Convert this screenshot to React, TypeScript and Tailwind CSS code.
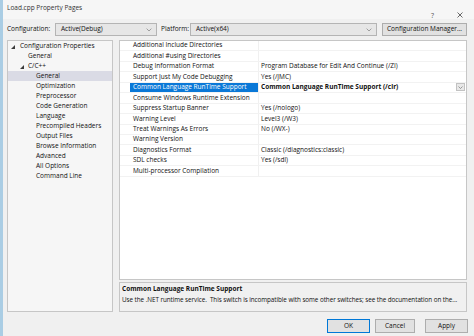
import React from "react";

function Chevron() {
  return (
    <svg width="6" height="4" viewBox="0 0 6 4">
      <path d="M0.6 0.6 L3 3 L5.4 0.6" fill="none" stroke="#8c8c8c" strokeWidth="0.8" />
    </svg>
  );
}

function Tri() {
  return (
    <svg width="4" height="4" viewBox="0 0 4 4">
      <polygon points="4,0 4,4 0,4" fill="#3c3c3c" />
    </svg>
  );
}

type TreeItem = { label: string; pad: string; exp?: boolean; slot?: string; sel?: boolean };

const tree: TreeItem[] = [
  { label: "Configuration Properties", pad: "pl-[3px]", exp: true, slot: "w-[9px]" },
  { label: "General", pad: "pl-[20px]" },
  { label: "C/C++", pad: "pl-[12px]", exp: true, slot: "w-[8px]" },
  { label: "General", pad: "pl-[28px]", sel: true },
  { label: "Optimization", pad: "pl-[28px]" },
  { label: "Preprocessor", pad: "pl-[28px]" },
  { label: "Code Generation", pad: "pl-[28px]" },
  { label: "Language", pad: "pl-[28px]" },
  { label: "Precompiled Headers", pad: "pl-[28px]" },
  { label: "Output Files", pad: "pl-[28px]" },
  { label: "Browse Information", pad: "pl-[28px]" },
  { label: "Advanced", pad: "pl-[28px]" },
  { label: "All Options", pad: "pl-[28px]" },
  { label: "Command Line", pad: "pl-[28px]" },
];

const rows: [string, string][] = [
  ["Additional Include Directories", ""],
  ["Additional #using Directories", ""],
  ["Debug Information Format", "Program Database for Edit And Continue (/ZI)"],
  ["Support Just My Code Debugging", "Yes (/JMC)"],
  ["Common Language RunTime Support", "Common Language RunTime Support (/clr)"],
  ["Consume Windows Runtime Extension", ""],
  ["Suppress Startup Banner", "Yes (/nologo)"],
  ["Warning Level", "Level3 (/W3)"],
  ["Treat Warnings As Errors", "No (/WX-)"],
  ["Warning Version", ""],
  ["Diagnostics Format", "Classic (/diagnostics:classic)"],
  ["SDL checks", "Yes (/sdl)"],
  ["Multi-processor Compilation", ""],
];

export default function App() {
  return (
    <div className="w-[474px] h-[336px] flex bg-[#f0f0f0] overflow-hidden font-['Open_Sans',sans-serif] text-[6.5px] leading-none text-[#111]">
      <div className="w-[3px] h-full bg-[#aacde4]" />
      <div className="flex-1 flex flex-col">
        {/* title bar */}
        <div className="h-[19px] flex items-start bg-[#f6f6f6] relative">
          <span className="pl-[4px] pt-[5px] text-[#333]">Load.cpp Property Pages</span>
          <span className="absolute left-[428px] top-[12px] text-[7px] text-[#555]">?</span>
          <svg className="absolute left-[454px] top-[12px]" width="6" height="6" viewBox="0 0 6 6">
            <path d="M0.5 0.5 L5.5 5.5 M5.5 0.5 L0.5 5.5" stroke="#444" strokeWidth="0.8" />
          </svg>
        </div>

        {/* configuration row */}
        <div className="mt-[4px] h-[13px] flex items-center pl-[4px]">
          <span className="w-[48px]">Configuration:</span>
          <div className="w-[102px] h-[13px] border border-[#b4b4b4] bg-[#e6e6e6] flex items-center justify-between pl-[5px] pr-[4px]">
            <span>Active(Debug)</span>
            <Chevron />
          </div>
          <span className="ml-[4px] w-[29px]">Platform:</span>
          <div className="w-[187px] h-[13px] border border-[#b4b4b4] bg-[#e6e6e6] flex items-center justify-between pl-[5px] pr-[4px]">
            <span>Active(x64)</span>
            <Chevron />
          </div>
          <div className="ml-[5px] w-[85px] h-[13px] border border-[#adadad] bg-[#e1e1e1] flex items-center justify-center">
            Configuration Manager...
          </div>
        </div>

        {/* main area */}
        <div className="mt-[4px] h-[272px] flex pl-[4px]">
          {/* tree */}
          <div className="w-[106px] h-full border border-[#c6c6c6] bg-[#f6f6f6] flex flex-col">
            {tree.map((t, i) => (
              <div
                key={i}
                className={`h-[10px] flex items-center ${t.pad} ${t.sel ? "bg-[#dadbe5]" : ""}`}
              >
                {t.exp && (
                  <span className={`${t.slot} flex items-center pt-[1px]`}>
                    <Tri />
                  </span>
                )}
                <span>{t.label}</span>
              </div>
            ))}
          </div>

          {/* right column */}
          <div className="ml-[6px] w-[348px] h-full flex flex-col">
            <div className="h-[240px] border border-[#c6c6c6] bg-white flex flex-col">
              {rows.map(([name, value], i) => {
                const sel = i === 4;
                return (
                  <div key={i} className="h-[10.45px] flex border-b border-[#f2f2f2]">
                    <div className="w-[10px]" />
                    <div
                      className={`w-[128px] flex items-center pl-[3px] whitespace-nowrap ${
                        sel ? "bg-[#0a78d7] text-white" : ""
                      }`}
                    >
                      {name}
                    </div>
                    <div className="w-px bg-[#f0f0f0]" />
                    <div className="flex-1 flex items-center justify-between pl-[2px] pr-[1px] whitespace-nowrap">
                      <span className={sel ? "font-bold" : ""}>{value}</span>
                      {sel && (
                        <div className="w-[9px] h-[8px] border border-[#c2c2c2] bg-[#e8e8e8] flex items-center justify-center">
                          <svg width="5" height="3" viewBox="0 0 5 3">
                            <path d="M0.5 0.5 L2.5 2.5 L4.5 0.5" fill="none" stroke="#777" strokeWidth="0.7" />
                          </svg>
                        </div>
                      )}
                    </div>
                  </div>
                );
              })}
            </div>
            <div className="mt-[2px] h-[30px] border border-[#c6c6c6] bg-[#f0f0f0] flex flex-col pl-[2px] pt-[3px] gap-[4px]">
              <span className="font-bold">Common Language RunTime Support</span>
              <span className="whitespace-nowrap text-[6.3px] tracking-[-0.05px]">
                Use the .NET runtime service.&nbsp; This switch is incompatible with some other switches; see the documentation on the...
              </span>
            </div>
          </div>
        </div>

        {/* buttons */}
        <div className="mt-[7px] h-[14px] flex justify-end pr-[6px] gap-[5px]">
          <div className="w-[43px] h-[14px] border border-[#0078d7] bg-[#e1e1e1] flex items-center justify-center">OK</div>
          <div className="w-[40px] h-[14px] border border-[#adadad] bg-[#e1e1e1] flex items-center justify-center">Cancel</div>
          <div className="ml-[5px] w-[43px] h-[14px] border border-[#adadad] bg-[#e1e1e1] flex items-center justify-center">Apply</div>
        </div>
      </div>
    </div>
  );
}
